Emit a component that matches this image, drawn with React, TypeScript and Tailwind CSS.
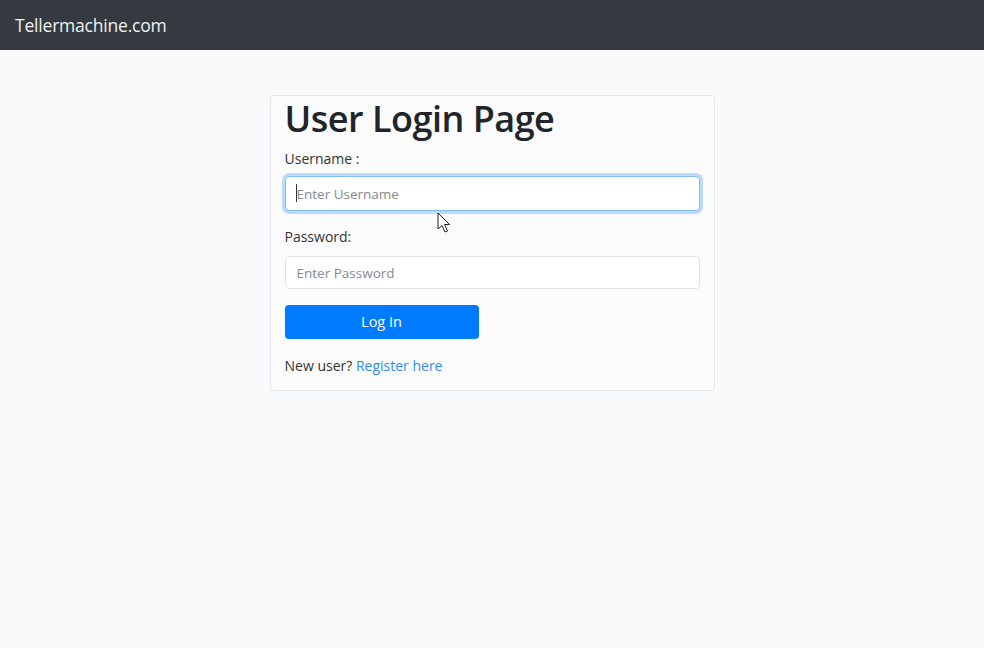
import React from 'react';

const font = { fontFamily: '"Open Sans", "Noto Sans", sans-serif' };

const App: React.FC = () => {
  return (
    <div className="min-h-[648px] bg-[#f9fafb] relative" style={font}>
      <nav className="h-[50px] bg-[#343a40] flex items-center px-[15px]">
        <span className="text-[17.5px] text-[#f1f1f1] tracking-[-0.2px]">Tellermachine.com</span>
      </nav>

      <div className="flex justify-center pt-[45px]">
        <div className="w-[445px] bg-[#fbfbfb] border border-[#e5e7ea] rounded-[3px] px-[14px] pt-0 pb-[14px]">
          <h1 className="text-[36px] leading-[46px] font-semibold text-[#212529] tracking-[-0.5px]">User Login Page</h1>
          <label className="block text-[14px] text-[#333] mt-[6px] mb-[7px]">Username :</label>
          <div className="relative">
            <input
              className="w-full h-[35px] rounded-[4px] border border-[#80bdff] bg-white px-[11px] text-[13.5px] outline-none shadow-[0_0_0_3px_rgba(0,123,255,0.25)] placeholder:text-[#858a8f]"
              placeholder="Enter Username"
            />
            <span className="absolute left-[11px] top-[8px] w-px h-[18px] bg-[#333]" />
          </div>
          <label className="block text-[14px] text-[#333] mt-[15px] mb-[9px]">Password:</label>
          <input
            type="password"
            className="w-full h-[33px] rounded-[4px] border border-[#dfe2e5] bg-white px-[11px] text-[13.5px] outline-none placeholder:text-[#858a8f]"
            placeholder="Enter Password"
          />
          <button className="mt-[16px] w-[194px] h-[34px] rounded-[4px] bg-[#007bff] text-white text-[14.5px]">
            Log In
          </button>
          <p className="mt-[16px] text-[14px] text-[#333]">
            New user? <a className="text-[#2f8cf5]">Register here</a>
          </p>
        </div>
      </div>

      <svg className="absolute left-[437px] top-[212px]" width="14" height="22" viewBox="0 0 14 22">
        <path d="M1 1 L1 17 L5 13.5 L8 20 L10.5 19 L7.5 12.5 L12.5 12.5 Z" fill="#fff" stroke="#222" strokeWidth="1" strokeLinejoin="round" />
      </svg>
    </div>
  );
};

export default App;
